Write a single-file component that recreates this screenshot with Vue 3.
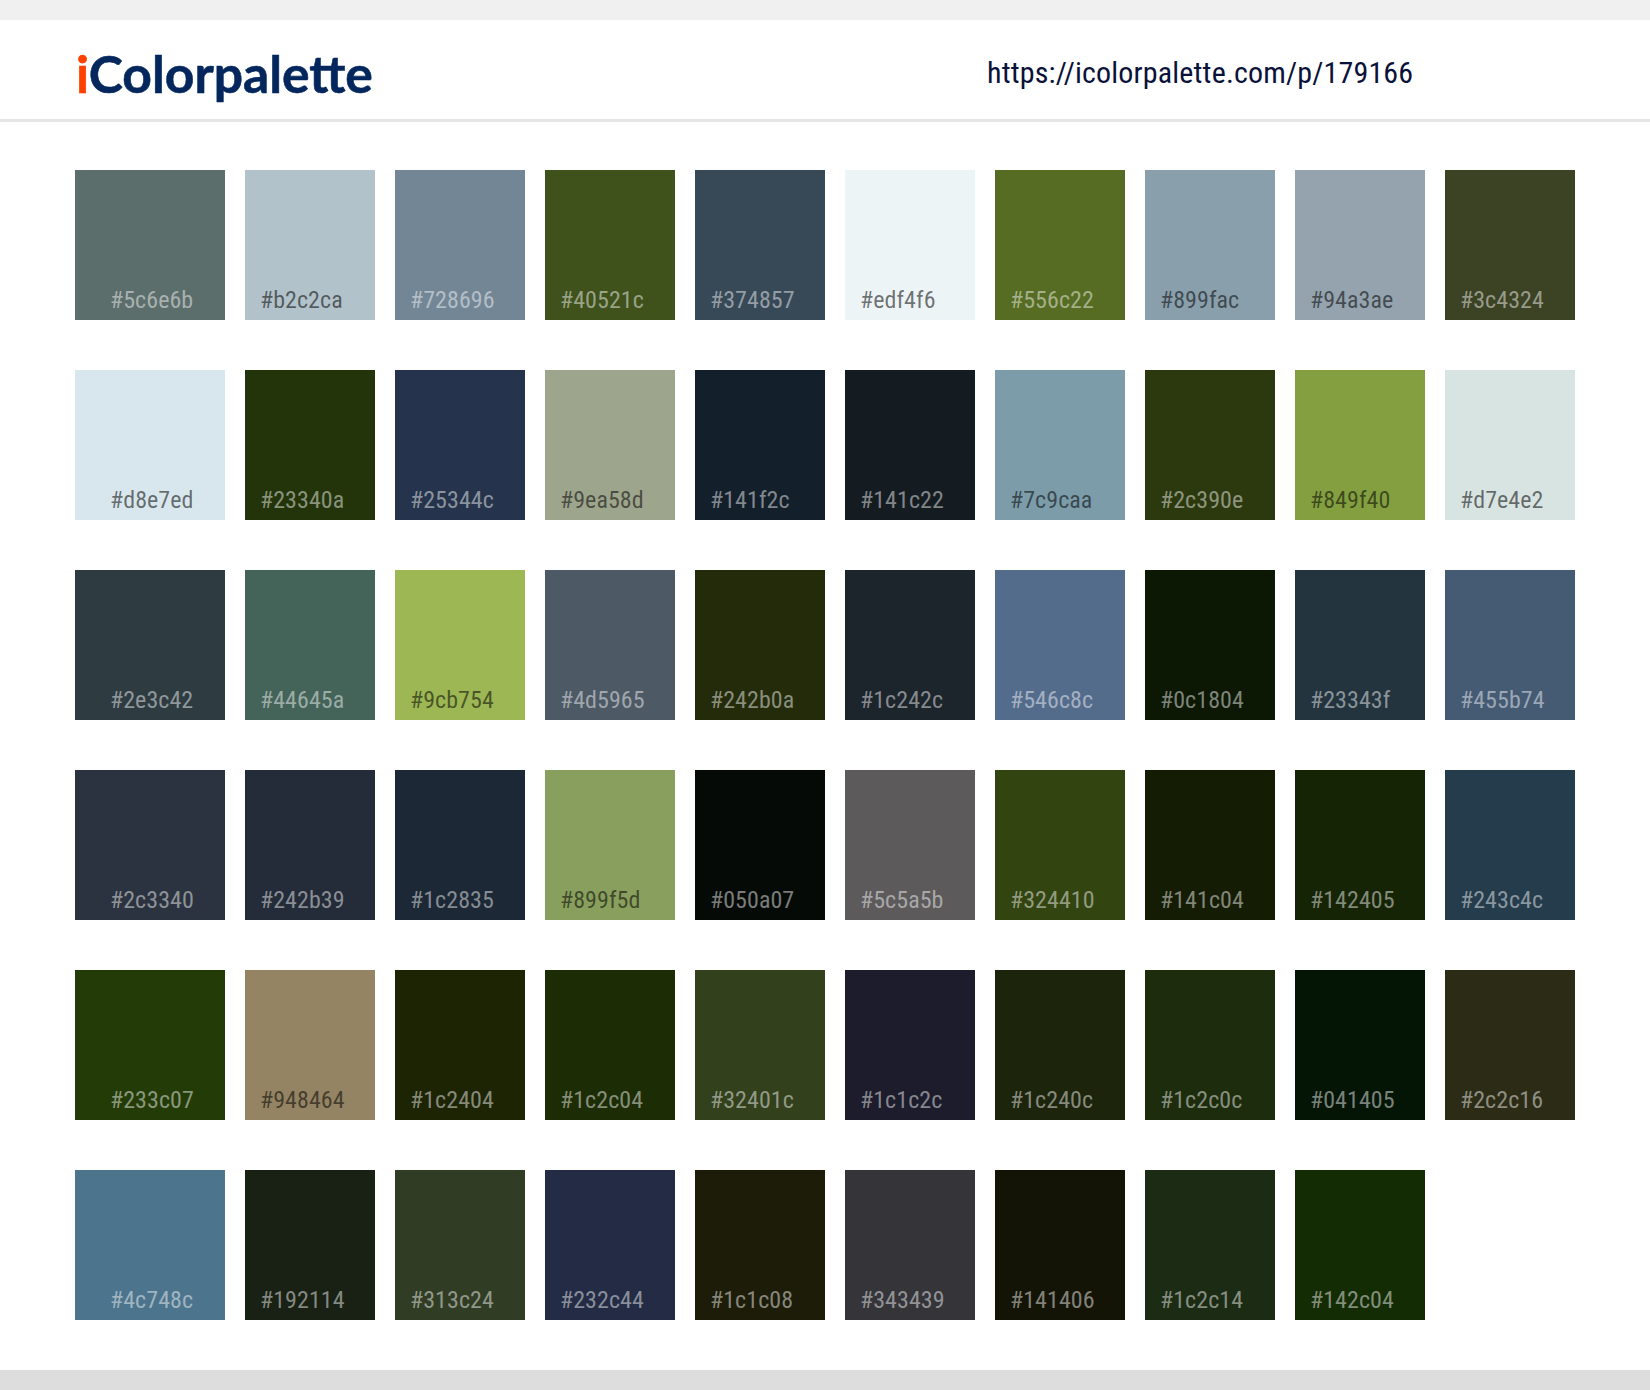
<template>
  <div class="page">
    <header class="site-header">
      <div class="logo"><span class="logo-i">i</span>Colorpalette</div>
      <div class="url">https://icolorpalette.com/p/179166</div>
    </header>
    <main class="palette">
      <div
        v-for="color in colors"
        :key="color"
        class="swatch"
        :style="{ backgroundColor: color }"
      >
        <span class="code" :class="isLight(color) ? 'on-light' : 'on-dark'">{{ color }}</span>
      </div>
    </main>
    <footer class="site-footer"></footer>
  </div>
</template>

<script setup>
const colors = [
  '#5c6e6b', '#b2c2ca', '#728696', '#40521c', '#374857', '#edf4f6', '#556c22', '#899fac', '#94a3ae', '#3c4324',
  '#d8e7ed', '#23340a', '#25344c', '#9ea58d', '#141f2c', '#141c22', '#7c9caa', '#2c390e', '#849f40', '#d7e4e2',
  '#2e3c42', '#44645a', '#9cb754', '#4d5965', '#242b0a', '#1c242c', '#546c8c', '#0c1804', '#23343f', '#455b74',
  '#2c3340', '#242b39', '#1c2835', '#899f5d', '#050a07', '#5c5a5b', '#324410', '#141c04', '#142405', '#243c4c',
  '#233c07', '#948464', '#1c2404', '#1c2c04', '#32401c', '#1c1c2c', '#1c240c', '#1c2c0c', '#041405', '#2c2c16',
  '#4c748c', '#192114', '#313c24', '#232c44', '#1c1c08', '#343439', '#141406', '#1c2c14', '#142c04',
]

// same cut-off the labels seem to use: dark text only on the pale swatches
function isLight(hex) {
  const r = parseInt(hex.slice(1, 3), 16)
  const g = parseInt(hex.slice(3, 5), 16)
  const b = parseInt(hex.slice(5, 7), 16)
  return (r * 299 + g * 587 + b * 114) / 1000 > 132
}
</script>

<style>
html,
body {
  margin: 0;
  background: #fff;
}
</style>

<style scoped>
.page {
  width: 1650px;
  height: 1390px;
  display: flex;
  flex-direction: column;
  border-top: 20px solid #f0f0f0;
  box-sizing: border-box;
  background: #fff;
}

.site-header {
  height: 102px;
  flex: none;
  box-sizing: border-box;
  border-bottom: 3px solid #e6e6e6;
  padding-left: 76px;
  display: flex;
  align-items: center;
  font-family: Roboto, sans-serif;
}

.logo {
  width: 911px;
  margin-top: 7px;
  font-family: Lato, sans-serif;
  font-weight: 700;
  font-size: 51.6px;
  line-height: 60px;
  color: #03275c;
  -webkit-text-stroke: 0.6px #03275c;
}

.logo-i {
  color: #ff4100;
  -webkit-text-stroke-color: #ff4100;
}

.url {
  font-size: 30px;
  line-height: 40px;
  letter-spacing: 0.16px;
  color: #0b1239;
  font-stretch: 75%;
  margin-top: 7px;
  white-space: nowrap;
}

.palette {
  flex: 1;
  padding: 48px 0 0 75px;
  display: grid;
  grid-template-columns: 150px repeat(9, 130px);
  grid-auto-rows: 150px;
  gap: 50px 20px;
  align-content: start;
}

.swatch {
  display: flex;
  align-items: flex-end;
  padding: 0 0 5px 15px;
  box-sizing: border-box;
}

.swatch:nth-child(10n + 1) {
  padding-left: 35px;
}

.code {
  font-family: Roboto, sans-serif;
  font-stretch: 75%;
  font-size: 24px;
  line-height: 30px;
  letter-spacing: 0.05px;
}

.on-dark {
  color: rgba(255, 255, 255, 0.47);
}

.on-light {
  color: rgba(0, 0, 0, 0.55);
}

.site-footer {
  height: 20px;
  flex: none;
  background: #ddd;
}
</style>
